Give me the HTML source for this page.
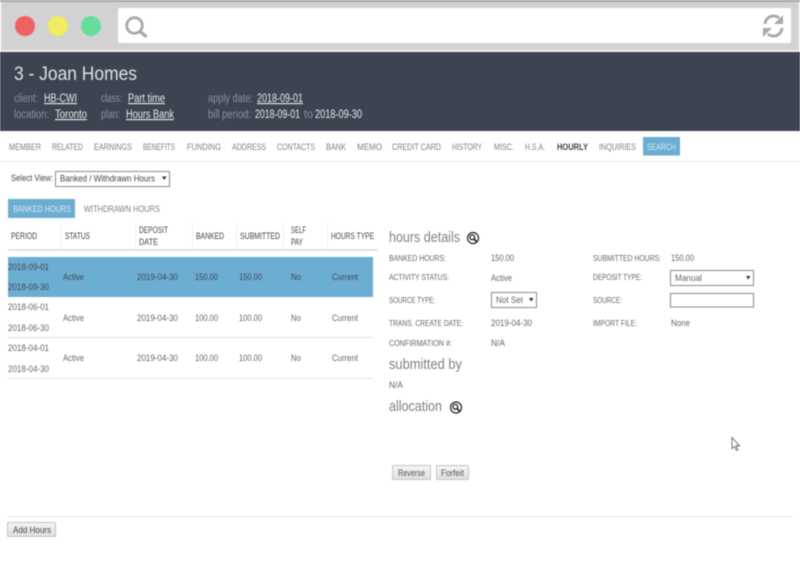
<!DOCTYPE html>
<html lang="en">
<head>
<meta charset="utf-8">
<title>3 - Joan Homes</title>
<style>
html,body{margin:0;padding:0;background:#fff;width:800px;height:573px;overflow:hidden}
svg{display:block;filter:blur(.4px)}
text{font-family:"Liberation Sans",Arial,sans-serif;font-size:9.500px;fill:#555;white-space:pre}
.n{fill:#808080;font-size:9.500px}
.h{fill:#444;font-size:9px}
.d{fill:#666;font-size:9.500px}
.l{fill:#666;font-size:8.500px}
.t{fill:#808080;font-size:14.500px}
.m{fill:#8b919b;font-size:11.500px}
.w{fill:#e8e9ec;font-size:11.500px}
.b{fill:#555;font-size:9.500px}
</style>
</head>
<body>
<svg width="800" height="573" viewBox="0 0 800 573" xmlns="http://www.w3.org/2000/svg">
<rect width="800" height="573" fill="#fff"/>
<!-- browser chrome -->
<rect x="0" y="0" width="800" height="2" fill="#a8a8a8"/>
<rect x="1" y="2" width="798" height="48" fill="#d2d2d2"/>
<rect x="1" y="50" width="798" height="2" fill="#efefef"/>
<circle cx="25" cy="26" r="10" fill="#ee6161"/>
<circle cx="58" cy="26" r="10" fill="#f1ec62"/>
<circle cx="91" cy="26" r="10" fill="#66dd9c"/>
<rect x="118" y="8" width="673" height="35" rx="2" fill="#fff"/>
<circle cx="134.500" cy="25.500" r="7.800" fill="none" stroke="#a9a9a9" stroke-width="2.800"/>
<path d="M140 31.500L145.500 36" stroke="#a9a9a9" stroke-width="3.200" stroke-linecap="round"/>
<path d="M765 24a8.500 8.500 0 0 1 14-6" fill="none" stroke="#a9a9a9" stroke-width="3"/>
<path d="M783 15v9h-9z" fill="#a9a9a9"/>
<path d="M782 28a8.500 8.500 0 0 1-14 6" fill="none" stroke="#a9a9a9" stroke-width="3"/>
<path d="M763 37v-9h9z" fill="#a9a9a9"/>
<!-- dark header -->
<rect x="0" y="52" width="800" height="79" fill="#3d4350"/>
<text x="14" y="80" textLength="123" lengthAdjust="spacingAndGlyphs" style="font-size:19.500px;fill:#dfe1e5">3 - Joan Homes</text>
<text class="m" x="14" y="102" textLength="24" lengthAdjust="spacingAndGlyphs">client:</text>
<text class="w" x="44" y="102" textLength="33" lengthAdjust="spacingAndGlyphs" text-decoration="underline">HB-CWI</text>
<text class="m" x="101" y="102" textLength="21" lengthAdjust="spacingAndGlyphs">class:</text>
<text class="w" x="128" y="102" textLength="37" lengthAdjust="spacingAndGlyphs" text-decoration="underline">Part time</text>
<text class="m" x="208" y="102" textLength="45" lengthAdjust="spacingAndGlyphs">apply date:</text>
<text class="w" x="257" y="102" textLength="46" lengthAdjust="spacingAndGlyphs" text-decoration="underline">2018-09-01</text>
<text class="m" x="14" y="118" textLength="35" lengthAdjust="spacingAndGlyphs">location:</text>
<text class="w" x="55" y="118" textLength="32" lengthAdjust="spacingAndGlyphs" text-decoration="underline">Toronto</text>
<text class="m" x="101" y="118" textLength="19" lengthAdjust="spacingAndGlyphs">plan:</text>
<text class="w" x="126" y="118" textLength="48" lengthAdjust="spacingAndGlyphs" text-decoration="underline">Hours Bank</text>
<text class="m" x="208" y="118" textLength="43" lengthAdjust="spacingAndGlyphs">bill period:</text>
<text class="w" x="255" y="118" textLength="45" lengthAdjust="spacingAndGlyphs">2018-09-01</text>
<text class="m" x="304" y="118" textLength="9" lengthAdjust="spacingAndGlyphs">to</text>
<text class="w" x="315" y="118" textLength="47" lengthAdjust="spacingAndGlyphs">2018-09-30</text>
<!-- nav -->
<rect x="643" y="137" width="37" height="18.500" fill="#6cadd2"/>
<text class="n" x="9" y="150" textLength="32" lengthAdjust="spacingAndGlyphs">MEMBER</text>
<text class="n" x="52" y="150" textLength="31" lengthAdjust="spacingAndGlyphs">RELATED</text>
<text class="n" x="94" y="150" textLength="38" lengthAdjust="spacingAndGlyphs">EARNINGS</text>
<text class="n" x="143" y="150" textLength="32" lengthAdjust="spacingAndGlyphs">BENEFITS</text>
<text class="n" x="187" y="150" textLength="34" lengthAdjust="spacingAndGlyphs">FUNDING</text>
<text class="n" x="232" y="150" textLength="34" lengthAdjust="spacingAndGlyphs">ADDRESS</text>
<text class="n" x="277" y="150" textLength="38" lengthAdjust="spacingAndGlyphs">CONTACTS</text>
<text class="n" x="326" y="150" textLength="20" lengthAdjust="spacingAndGlyphs">BANK</text>
<text class="n" x="357" y="150" textLength="25" lengthAdjust="spacingAndGlyphs">MEMO</text>
<text class="n" x="392" y="150" textLength="49" lengthAdjust="spacingAndGlyphs">CREDIT CARD</text>
<text class="n" x="452" y="150" textLength="30" lengthAdjust="spacingAndGlyphs">HISTORY</text>
<text class="n" x="494" y="150" textLength="20" lengthAdjust="spacingAndGlyphs">MISC.</text>
<text class="n" x="525" y="150" textLength="20" lengthAdjust="spacingAndGlyphs">H.S.A.</text>
<text x="557" y="150" textLength="31" lengthAdjust="spacingAndGlyphs" style="font-weight:bold;fill:#444">HOURLY</text>
<text class="n" x="599" y="150" textLength="37" lengthAdjust="spacingAndGlyphs">INQUIRIES</text>
<text x="647" y="150" textLength="29" lengthAdjust="spacingAndGlyphs" style="fill:#d6e8f3">SEARCH</text>
<rect x="0" y="161" width="800" height="1" fill="#e6e6e6"/>
<!-- select view -->
<text x="11" y="181" textLength="42" lengthAdjust="spacingAndGlyphs" style="fill:#444">Select View:</text>
<rect x="55.500" y="171.500" width="114" height="15" fill="#fff" stroke="#8a8a8a"/>
<text x="60" y="181.500" textLength="95" lengthAdjust="spacingAndGlyphs" style="fill:#444">Banked / Withdrawn Hours</text>
<path d="M162 176.500h4.500l-2.250 3.500z" fill="#333"/>
<!-- tabs -->
<rect x="8" y="199" width="67" height="19" fill="#6cadd2"/>
<text x="13" y="212" textLength="58" lengthAdjust="spacingAndGlyphs" style="fill:#d6e8f3">BANKED HOURS</text>
<text class="n" x="84" y="212" textLength="76" lengthAdjust="spacingAndGlyphs">WITHDRAWN HOURS</text>
<!-- table head -->
<g fill="#efefef">
<rect x="61" y="224" width="1" height="25"/><rect x="135" y="224" width="1" height="25"/><rect x="192" y="224" width="1" height="25"/><rect x="236" y="224" width="1" height="25"/><rect x="283" y="224" width="1" height="25"/><rect x="327" y="224" width="1" height="25"/>
</g>
<text class="h" x="11" y="239" textLength="26" lengthAdjust="spacingAndGlyphs">PERIOD</text>
<text class="h" x="65" y="239" textLength="25" lengthAdjust="spacingAndGlyphs">STATUS</text>
<text class="h" x="139" y="233" textLength="29" lengthAdjust="spacingAndGlyphs">DEPOSIT</text>
<text class="h" x="139" y="245" textLength="19" lengthAdjust="spacingAndGlyphs">DATE</text>
<text class="h" x="196" y="239" textLength="28" lengthAdjust="spacingAndGlyphs">BANKED</text>
<text class="h" x="240" y="239" textLength="40" lengthAdjust="spacingAndGlyphs">SUBMITTED</text>
<text class="h" x="291" y="233" textLength="15" lengthAdjust="spacingAndGlyphs">SELF</text>
<text class="h" x="291" y="245" textLength="12" lengthAdjust="spacingAndGlyphs">PAY</text>
<text class="h" x="331" y="239" textLength="43" lengthAdjust="spacingAndGlyphs">HOURS TYPE</text>
<rect x="8" y="249" width="370" height="2" fill="#e2e2e2"/>
<!-- rows -->
<rect x="8" y="257" width="365" height="40" fill="#6cadd2"/>
<rect x="8" y="337" width="365" height="1" fill="#e0e0e0"/>
<rect x="8" y="378" width="365" height="1" fill="#e0e0e0"/>
<text class="d" x="8" y="270" textLength="41" lengthAdjust="spacingAndGlyphs" style="fill:#3c4a55">2018-09-01</text>
<text class="d" x="8" y="290" textLength="41" lengthAdjust="spacingAndGlyphs" style="fill:#3c4a55">2018-09-30</text>
<text class="d" x="63" y="280" textLength="21" lengthAdjust="spacingAndGlyphs" style="fill:#3c4a55">Active</text>
<text class="d" x="137" y="280" textLength="41" lengthAdjust="spacingAndGlyphs" style="fill:#3c4a55">2019-04-30</text>
<text class="d" x="195" y="280" textLength="23" lengthAdjust="spacingAndGlyphs" style="fill:#3c4a55">150.00</text>
<text class="d" x="239" y="280" textLength="23" lengthAdjust="spacingAndGlyphs" style="fill:#3c4a55">150.00</text>
<text class="d" x="291" y="280" textLength="10" lengthAdjust="spacingAndGlyphs" style="fill:#3c4a55">No</text>
<text class="d" x="332" y="280" textLength="26" lengthAdjust="spacingAndGlyphs" style="fill:#3c4a55">Current</text>
<text class="d" x="8" y="310" textLength="41" lengthAdjust="spacingAndGlyphs">2018-06-01</text>
<text class="d" x="8" y="331" textLength="41" lengthAdjust="spacingAndGlyphs">2018-06-30</text>
<text class="d" x="63" y="321" textLength="21" lengthAdjust="spacingAndGlyphs">Active</text>
<text class="d" x="137" y="321" textLength="41" lengthAdjust="spacingAndGlyphs">2019-04-30</text>
<text class="d" x="195" y="321" textLength="23" lengthAdjust="spacingAndGlyphs">100.00</text>
<text class="d" x="239" y="321" textLength="23" lengthAdjust="spacingAndGlyphs">100.00</text>
<text class="d" x="291" y="321" textLength="10" lengthAdjust="spacingAndGlyphs">No</text>
<text class="d" x="332" y="321" textLength="26" lengthAdjust="spacingAndGlyphs">Current</text>
<text class="d" x="8" y="351" textLength="41" lengthAdjust="spacingAndGlyphs">2018-04-01</text>
<text class="d" x="8" y="372" textLength="41" lengthAdjust="spacingAndGlyphs">2018-04-30</text>
<text class="d" x="63" y="361" textLength="21" lengthAdjust="spacingAndGlyphs">Active</text>
<text class="d" x="137" y="361" textLength="41" lengthAdjust="spacingAndGlyphs">2019-04-30</text>
<text class="d" x="195" y="361" textLength="23" lengthAdjust="spacingAndGlyphs">100.00</text>
<text class="d" x="239" y="361" textLength="23" lengthAdjust="spacingAndGlyphs">100.00</text>
<text class="d" x="291" y="361" textLength="10" lengthAdjust="spacingAndGlyphs">No</text>
<text class="d" x="332" y="361" textLength="26" lengthAdjust="spacingAndGlyphs">Current</text>
<!-- details -->
<text class="t" x="389" y="242" textLength="71" lengthAdjust="spacingAndGlyphs">hours details</text>
<circle cx="473" cy="238" r="5.500" fill="none" stroke="#222" stroke-width="1.200"/>
<circle cx="472.300" cy="237.300" r="2.400" fill="none" stroke="#222" stroke-width="1.300"/>
<path d="M474 239l2.500 2.500" stroke="#222" stroke-width="1.600"/>
<text class="l" x="389" y="261" textLength="57" lengthAdjust="spacingAndGlyphs">BANKED HOURS:</text>
<text class="d" x="491" y="261" textLength="23" lengthAdjust="spacingAndGlyphs">150.00</text>
<text class="l" x="593" y="261" textLength="68" lengthAdjust="spacingAndGlyphs">SUBMITTED HOURS:</text>
<text class="d" x="671" y="261" textLength="23" lengthAdjust="spacingAndGlyphs">150.00</text>
<text class="l" x="389" y="280" textLength="60" lengthAdjust="spacingAndGlyphs">ACTIVITY STATUS:</text>
<text class="d" x="491" y="281" textLength="21" lengthAdjust="spacingAndGlyphs">Active</text>
<text class="l" x="593" y="280" textLength="49" lengthAdjust="spacingAndGlyphs">DEPOSIT TYPE:</text>
<rect x="670.500" y="270.500" width="83" height="15" fill="#fff" stroke="#8a8a8a"/>
<text class="d" x="675" y="281" textLength="27" lengthAdjust="spacingAndGlyphs">Manual</text>
<path d="M746 276h4.500l-2.250 3.500z" fill="#333"/>
<text class="l" x="389" y="303" textLength="46" lengthAdjust="spacingAndGlyphs">SOURCE TYPE:</text>
<rect x="491.500" y="292.500" width="45" height="15" fill="#fff" stroke="#8a8a8a"/>
<text class="d" x="496" y="303" textLength="27" lengthAdjust="spacingAndGlyphs">Not Set</text>
<path d="M529 298h4.500l-2.250 3.500z" fill="#333"/>
<text class="l" x="593" y="303" textLength="29" lengthAdjust="spacingAndGlyphs">SOURCE:</text>
<rect x="670.500" y="293.500" width="83" height="13.500" fill="#fff" stroke="#8a8a8a"/>
<text class="l" x="389" y="326" textLength="74" lengthAdjust="spacingAndGlyphs">TRANS. CREATE DATE:</text>
<text class="d" x="491" y="326" textLength="41" lengthAdjust="spacingAndGlyphs">2019-04-30</text>
<text class="l" x="593" y="326" textLength="44" lengthAdjust="spacingAndGlyphs">IMPORT FILE:</text>
<text class="d" x="671" y="326" textLength="19" lengthAdjust="spacingAndGlyphs">None</text>
<text class="l" x="389" y="346" textLength="63" lengthAdjust="spacingAndGlyphs">CONFIRMATION #:</text>
<text class="d" x="491" y="346" textLength="14" lengthAdjust="spacingAndGlyphs">N/A</text>
<text class="t" x="389" y="369" textLength="73" lengthAdjust="spacingAndGlyphs">submitted by</text>
<text class="d" x="389" y="388" textLength="14" lengthAdjust="spacingAndGlyphs">N/A</text>
<text class="t" x="389" y="411" textLength="53" lengthAdjust="spacingAndGlyphs">allocation</text>
<circle cx="456" cy="407.500" r="5.500" fill="none" stroke="#222" stroke-width="1.200"/>
<circle cx="455.300" cy="406.800" r="2.400" fill="none" stroke="#222" stroke-width="1.300"/>
<path d="M457 408.500l2.500 2.500" stroke="#222" stroke-width="1.600"/>
<!-- cursor -->
<path d="M732 437.500v11l2.500-2 2 4 1.500-.7-2-4h3.500z" fill="#fff" stroke="#555" stroke-width=".8"/>
<!-- buttons -->
<defs><linearGradient id="g" x1="0" y1="0" x2="0" y2="1"><stop offset="0" stop-color="#f6f6f6"/><stop offset="1" stop-color="#dedede"/></linearGradient></defs>
<rect x="392.500" y="465.500" width="38" height="14" rx="1" fill="url(#g)" stroke="#c4c4c4"/>
<text class="b" x="398" y="476" textLength="27" lengthAdjust="spacingAndGlyphs">Reverse</text>
<rect x="436.500" y="465.500" width="32" height="14" rx="1" fill="url(#g)" stroke="#c4c4c4"/>
<text class="b" x="441" y="476" textLength="23" lengthAdjust="spacingAndGlyphs">Forfeit</text>
<rect x="8" y="516" width="784" height="1" fill="#e6e6e6"/>
<rect x="7.500" y="522.500" width="48" height="14" rx="1" fill="url(#g)" stroke="#c4c4c4"/>
<text x="13" y="533" textLength="38" lengthAdjust="spacingAndGlyphs" style="fill:#444">Add Hours</text>
</svg>
</body>
</html>
